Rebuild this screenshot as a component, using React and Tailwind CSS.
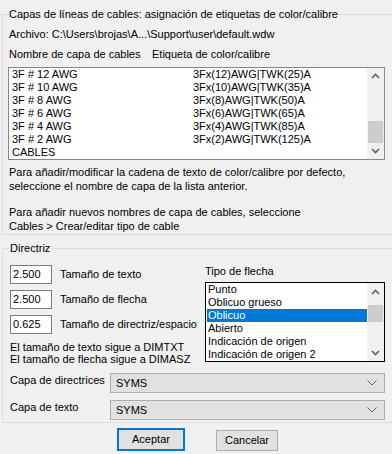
import React from "react";

function Up() {
  return (
    <svg width="9" height="6" viewBox="0 0 9 6" className="block">
      <path d="M1 5 L4.5 1.5 L8 5" fill="none" stroke="#606060" strokeWidth="1.6" />
    </svg>
  );
}
function Down() {
  return (
    <svg width="9" height="6" viewBox="0 0 9 6" className="block">
      <path d="M1 1 L4.5 4.5 L8 1" fill="none" stroke="#606060" strokeWidth="1.6" />
    </svg>
  );
}
function ComboChevron() {
  return (
    <svg width="10" height="6" viewBox="0 0 10 6" className="block">
      <path d="M0.5 0.5 L5 5 L9.5 0.5" fill="none" stroke="#606060" strokeWidth="1" />
    </svg>
  );
}

function ScrollBar({ thumbTop, thumbH }) {
  return (
    <div className="flex w-[17px] flex-col bg-[#f0f0f0]">
      <div className="flex h-[17px] items-center justify-center"><Up /></div>
      <div className="flex flex-1 flex-col">
        <div className="mx-[1px] bg-[#cdcdcd]" style={{ marginTop: thumbTop, height: thumbH }} />
      </div>
      <div className="flex h-[17px] items-center justify-center"><Down /></div>
    </div>
  );
}

const cables = [
  ["3F # 12 AWG", "3Fx(12)AWG|TWK(25)A"],
  ["3F # 10 AWG", "3Fx(10)AWG|TWK(35)A"],
  ["3F # 8 AWG", "3Fx(8)AWG|TWK(50)A"],
  ["3F # 6 AWG", "3Fx(6)AWG|TWK(65)A"],
  ["3F # 4 AWG", "3Fx(4)AWG|TWK(85)A"],
  ["3F # 2 AWG", "3Fx(2)AWG|TWK(125)A"],
  ["CABLES", ""],
];

const flechas = ["Punto", "Oblicuo grueso", "Oblicuo", "Abierto", "Indicación de origen", "Indicación de origen 2"];

function Field({ value, label }) {
  return (
    <div className="flex items-center">
      <div className="h-[19px] w-[42px] border border-[#7a7a7a] bg-white pl-[2px] leading-[17px]">{value}</div>
      <div className="ml-[8px]">{label}</div>
    </div>
  );
}

function Combo({ label, value, labelWidth }) {
  return (
    <div className="flex items-center">
      <div className="w-[100px] -mt-[5px]">{label}</div>
      <div className="flex h-[20px] w-[275px] items-center justify-between border border-[#adadad] bg-[#e1e1e1] pl-[5px] pr-[7px]">
        <span>{value}</span>
        <ComboChevron />
      </div>
    </div>
  );
}

export default function App() {
  return (
    <div className="h-[454px] w-[392px] overflow-hidden bg-[#f0f0f0] font-['Liberation_Sans',Arial,sans-serif] text-[11px] leading-[13px] text-black">
      {/* Group 1 */}
      <div className="relative ml-[2px] mt-[14px] h-[221px] w-[400px] border border-[#dcdcdc] pl-[6px]">
        <div className="absolute left-[5px] top-[-7px] bg-[#f0f0f0] px-[1px]">
          Capas de líneas de cables: asignación de etiquetas de color/calibre
        </div>
        <div className="mt-[13px]">Archivo: C:\Users\brojas\A...\Support\user\default.wdw</div>
        <div className="mt-[7px] flex">
          <span className="w-[143px]">Nombre de capa de cables</span>
          <span>Etiqueta de color/calibre</span>
        </div>
        <div className="-ml-[1px] mt-[6px] flex h-[93px] w-[377px] border border-[#828790] bg-white">
          <div className="flex-1 pl-[3px]">
            {cables.map(([a, b]) => (
              <div key={a} className="flex h-[13px]">
                <span className="w-[181px]">{a}</span>
                <span>{b}</span>
              </div>
            ))}
          </div>
          <ScrollBar thumbTop={36} thumbH={22} />
        </div>
        <div className="mt-[5px] leading-[14px]">
          <div>Para añadir/modificar la cadena de texto de color/calibre por defecto,</div>
          <div>seleccione el nombre de capa de la lista anterior.</div>
        </div>
        <div className="mt-[12px] leading-[14px]">
          <div>Para añadir nuevos nombres de capa de cables, seleccione</div>
          <div>Cables &gt; Crear/editar tipo de cable</div>
        </div>
      </div>

      {/* Group 2 */}
      <div className="relative ml-[2px] mt-[13px] h-[175px] w-[400px] border border-[#dcdcdc] pl-[7px]">
        <div className="absolute left-[6px] top-[-7px] bg-[#f0f0f0] px-[1px]">Directriz</div>
        <div className="flex">
          <div className="w-[195px]">
            <div className="mt-[16px] flex flex-col gap-[6px]">
              <Field value="2.500" label="Tamaño de texto" />
              <Field value="2.500" label="Tamaño de flecha" />
              <Field value="0.625" label="Tamaño de directriz/espacio" />
            </div>
            <div className="mt-[7px] leading-[12px]">
              <div>El tamaño de texto sigue a DIMTXT</div>
              <div>El tamaño de flecha sigue a DIMASZ</div>
            </div>
          </div>
          <div>
            <div className="mt-[16px]">Tipo de flecha</div>
            <div className="mt-[4px] flex h-[80px] w-[180px] border border-black bg-white">
              <div className="flex-1 pl-[1px]">
                {flechas.map((f, i) => (
                  <div
                    key={f}
                    className={
                      i === 2
                        ? "h-[13px] bg-[#0078d7] pl-[1px] text-white"
                        : "h-[13px] pl-[1px]"
                    }
                  >
                    {f}
                  </div>
                ))}
              </div>
              <ScrollBar thumbTop={5} thumbH={17} />
            </div>
          </div>
        </div>
        <div className="mt-[8px] flex flex-col gap-[7px]">
          <Combo label="Capa de directrices" value="SYMS" />
          <Combo label="Capa de texto" value="SYMS" />
        </div>
      </div>

      {/* Buttons */}
      <div className="mt-[5px] flex items-end gap-[31px] pl-[117px]">
        <div className="flex h-[23px] w-[68px] items-center justify-center border-2 border-[#0078d7] bg-[#e1e1e1]">
          Aceptar
        </div>
        <div className="flex h-[21px] w-[62px] items-center justify-center border border-[#adadad] bg-[#e1e1e1]">
          Cancelar
        </div>
      </div>
    </div>
  );
}
